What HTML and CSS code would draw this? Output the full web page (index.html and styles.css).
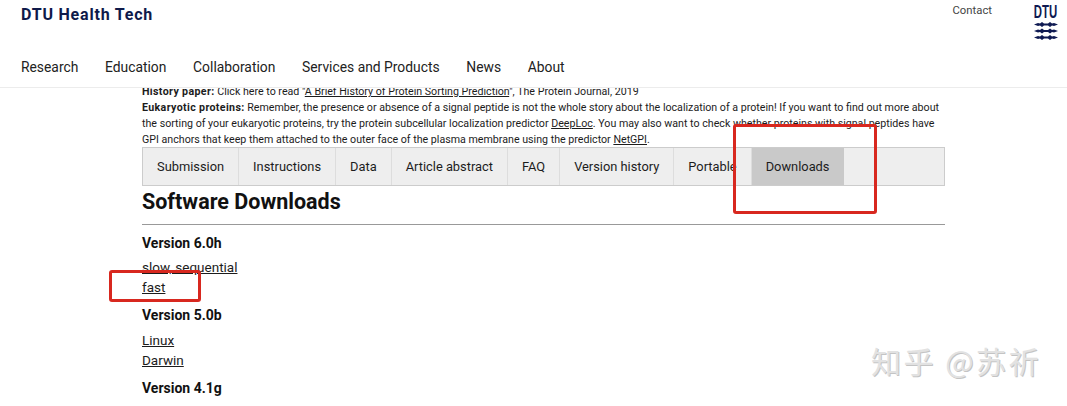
FILE: index.html
```html
<!DOCTYPE html>
<html lang="en">
<head>
<meta charset="utf-8">
<title>DTU Health Tech</title>
<link rel="stylesheet" href="styles.css">
</head>
<body>
<header class="site-header">
  <div class="top-row">
    <a class="brand">DTU Health Tech</a>
    <a class="contact">Contact</a>
    <div class="logo">
      <span class="logo-text">DTU</span>
      <svg class="logo-mark" width="24" height="18" viewBox="0 0 24 18">
        <g fill="#0f1a52">
          <path d="M0 2.5 L4 1 L6 1.4 L8 0 L10 1.4 L14 1.4 L16 0 L18 1.4 L20 1 L24 2.5 L20 4 L18 3.6 L16 5 L14 3.6 L10 3.6 L8 5 L6 3.6 L4 4 Z"/>
          <path d="M0 9 L4 7.5 L6 7.9 L8 6.5 L10 7.9 L14 7.9 L16 6.5 L18 7.9 L20 7.5 L24 9 L20 10.5 L18 10.1 L16 11.5 L14 10.1 L10 10.1 L8 11.5 L6 10.1 L4 10.5 Z"/>
          <path d="M0 15.5 L4 14 L6 14.4 L8 13 L10 14.4 L14 14.4 L16 13 L18 14.4 L20 14 L24 15.5 L20 17 L18 16.6 L16 18 L14 16.6 L10 16.6 L8 18 L6 16.6 L4 17 Z"/>
        </g>
      </svg>
    </div>
  </div>
  <nav class="main-nav">
    <a>Research</a><a>Education</a><a>Collaboration</a><a>Services and Products</a><a>News</a><a>About</a>
  </nav>
</header>
<main class="content">
  <div class="intro">
    <p><b>History paper:</b> Click here to read "<a>A Brief History of Protein Sorting Prediction</a>", The Protein Journal, 2019</p>
    <p><b>Eukaryotic proteins:</b> Remember, the presence or absence of a signal peptide is not the whole story about the localization of a protein! If you want to find out more about<br>the sorting of your eukaryotic proteins, try the protein subcellular localization predictor <a>DeepLoc</a>. You may also want to check whether proteins with signal peptides have<br>GPI anchors that keep them attached to the outer face of the plasma membrane using the predictor <a>NetGPI</a>.</p>
  </div>
  <ul class="tabs">
    <li>Submission</li><li>Instructions</li><li>Data</li><li>Article abstract</li><li>FAQ</li><li>Version history</li><li>Portable</li><li class="active">Downloads</li>
  </ul>
  <h2>Software Downloads</h2>
  <hr>
  <h4 class="first">Version 6.0h</h4>
  <div class="links tight"><a>slow, sequential</a><a>fast</a></div>
  <h4>Version 5.0b</h4>
  <div class="links"><a>Linux</a><a>Darwin</a></div>
  <h4>Version 4.1g</h4>
</main>
<div class="mark mark-tab"></div>
<div class="mark mark-fast"></div>
<div class="watermark">知乎 @苏祈</div>
</body>
</html>
```
FILE: styles.css
```css
html, body {
  margin: 0;
  height: 406px;
  overflow: hidden;
  background: #fff;
}
body {
  font-family: Roboto, "Noto Sans", sans-serif;
  color: #1c1c1c;
  position: relative;
}
a { color: inherit; }
.site-header {
  height: 88px;
  box-sizing: border-box;
  border-bottom: 1px solid #ececec;
  padding-left: 21px;
  background: #fff;
}
.top-row {
  display: flex;
  height: 50px;
  align-items: flex-start;
}
.brand {
  font-size: 16px;
  font-weight: 700;
  color: #0f1a4a;
  line-height: 30px;
  letter-spacing: .8px;
}
.contact {
  margin-left: auto;
  font-size: 11.3px;
  line-height: 21px;
  color: #444;
}
.logo {
  width: 24px;
  margin: 3px 9px 0 42px;
  display: flex;
  flex-direction: column;
  align-items: center;
}
.logo-text {
  font-family: "Liberation Sans", sans-serif;
  font-weight: 700;
  font-size: 19px;
  line-height: 17px;
  color: #0f1a52;
  transform: scaleX(.6);
}
.logo-mark { margin-top: 2px; display: block; }
.main-nav {
  display: flex;
  gap: 26.7px;
  font-size: 13.85px;
  line-height: 34px;
  color: #222;
}
.content {
  height: 318px;
  overflow: hidden;
  padding-left: 142px;
  width: 803px;
  box-sizing: content-box;
}
.intro {
  font-size: 10.67px;
  line-height: 16px;
  margin-top: -4px;
  white-space: nowrap;
}
.intro p { margin: 0; }
.intro b { letter-spacing: .35px; }
.intro a, .links a { text-decoration: underline; }
.tabs {
  list-style: none;
  margin: -1px 0 0;
  padding: 0;
  display: flex;
  height: 39px;
  box-sizing: border-box;
  background: #eee;
  border: 1px solid #ccc;
  font-size: 12.85px;
}
.tabs li {
  padding: 0 14px;
  line-height: 37px;
  border-right: 1px solid #ddd;
}
.tabs li.active {
  background: #c9c9c9;
  border-right: 0;
}
h2 {
  margin: 2px 0 0;
  font-size: 21.5px;
  line-height: 27px;
  font-weight: 700;
  color: #111;
}
hr {
  margin: 9px 0 0;
  border: 0;
  border-top: 1px solid #999;
}
h4 {
  margin: 8px 0 0;
  font-size: 14px;
  line-height: 20px;
  font-weight: 700;
  color: #111;
}
h4.first { margin-top: 8px; }
.links {
  margin-top: 5px;
  font-size: 13.5px;
  line-height: 20px;
  display: flex;
  flex-direction: column;
  align-items: flex-start;
}
.links.tight { margin-top: 4px; }
.mark {
  position: absolute;
  border: 3px solid #d8281f;
  border-radius: 3px;
  box-sizing: border-box;
}
.mark-tab { left: 733px; top: 124px; width: 144px; height: 90px; }
.mark-fast { left: 109px; top: 270px; width: 92px; height: 32px; }
.watermark {
  position: absolute;
  left: 871px;
  top: 340px;
  font-family: "Noto Sans CJK SC", sans-serif;
  font-size: 30px;
  line-height: 40px;
  letter-spacing: 2.5px;
  color: #e2e2e2;
  text-shadow: 1px 1px 0 #c4c4c4;
  white-space: nowrap;
}
```
